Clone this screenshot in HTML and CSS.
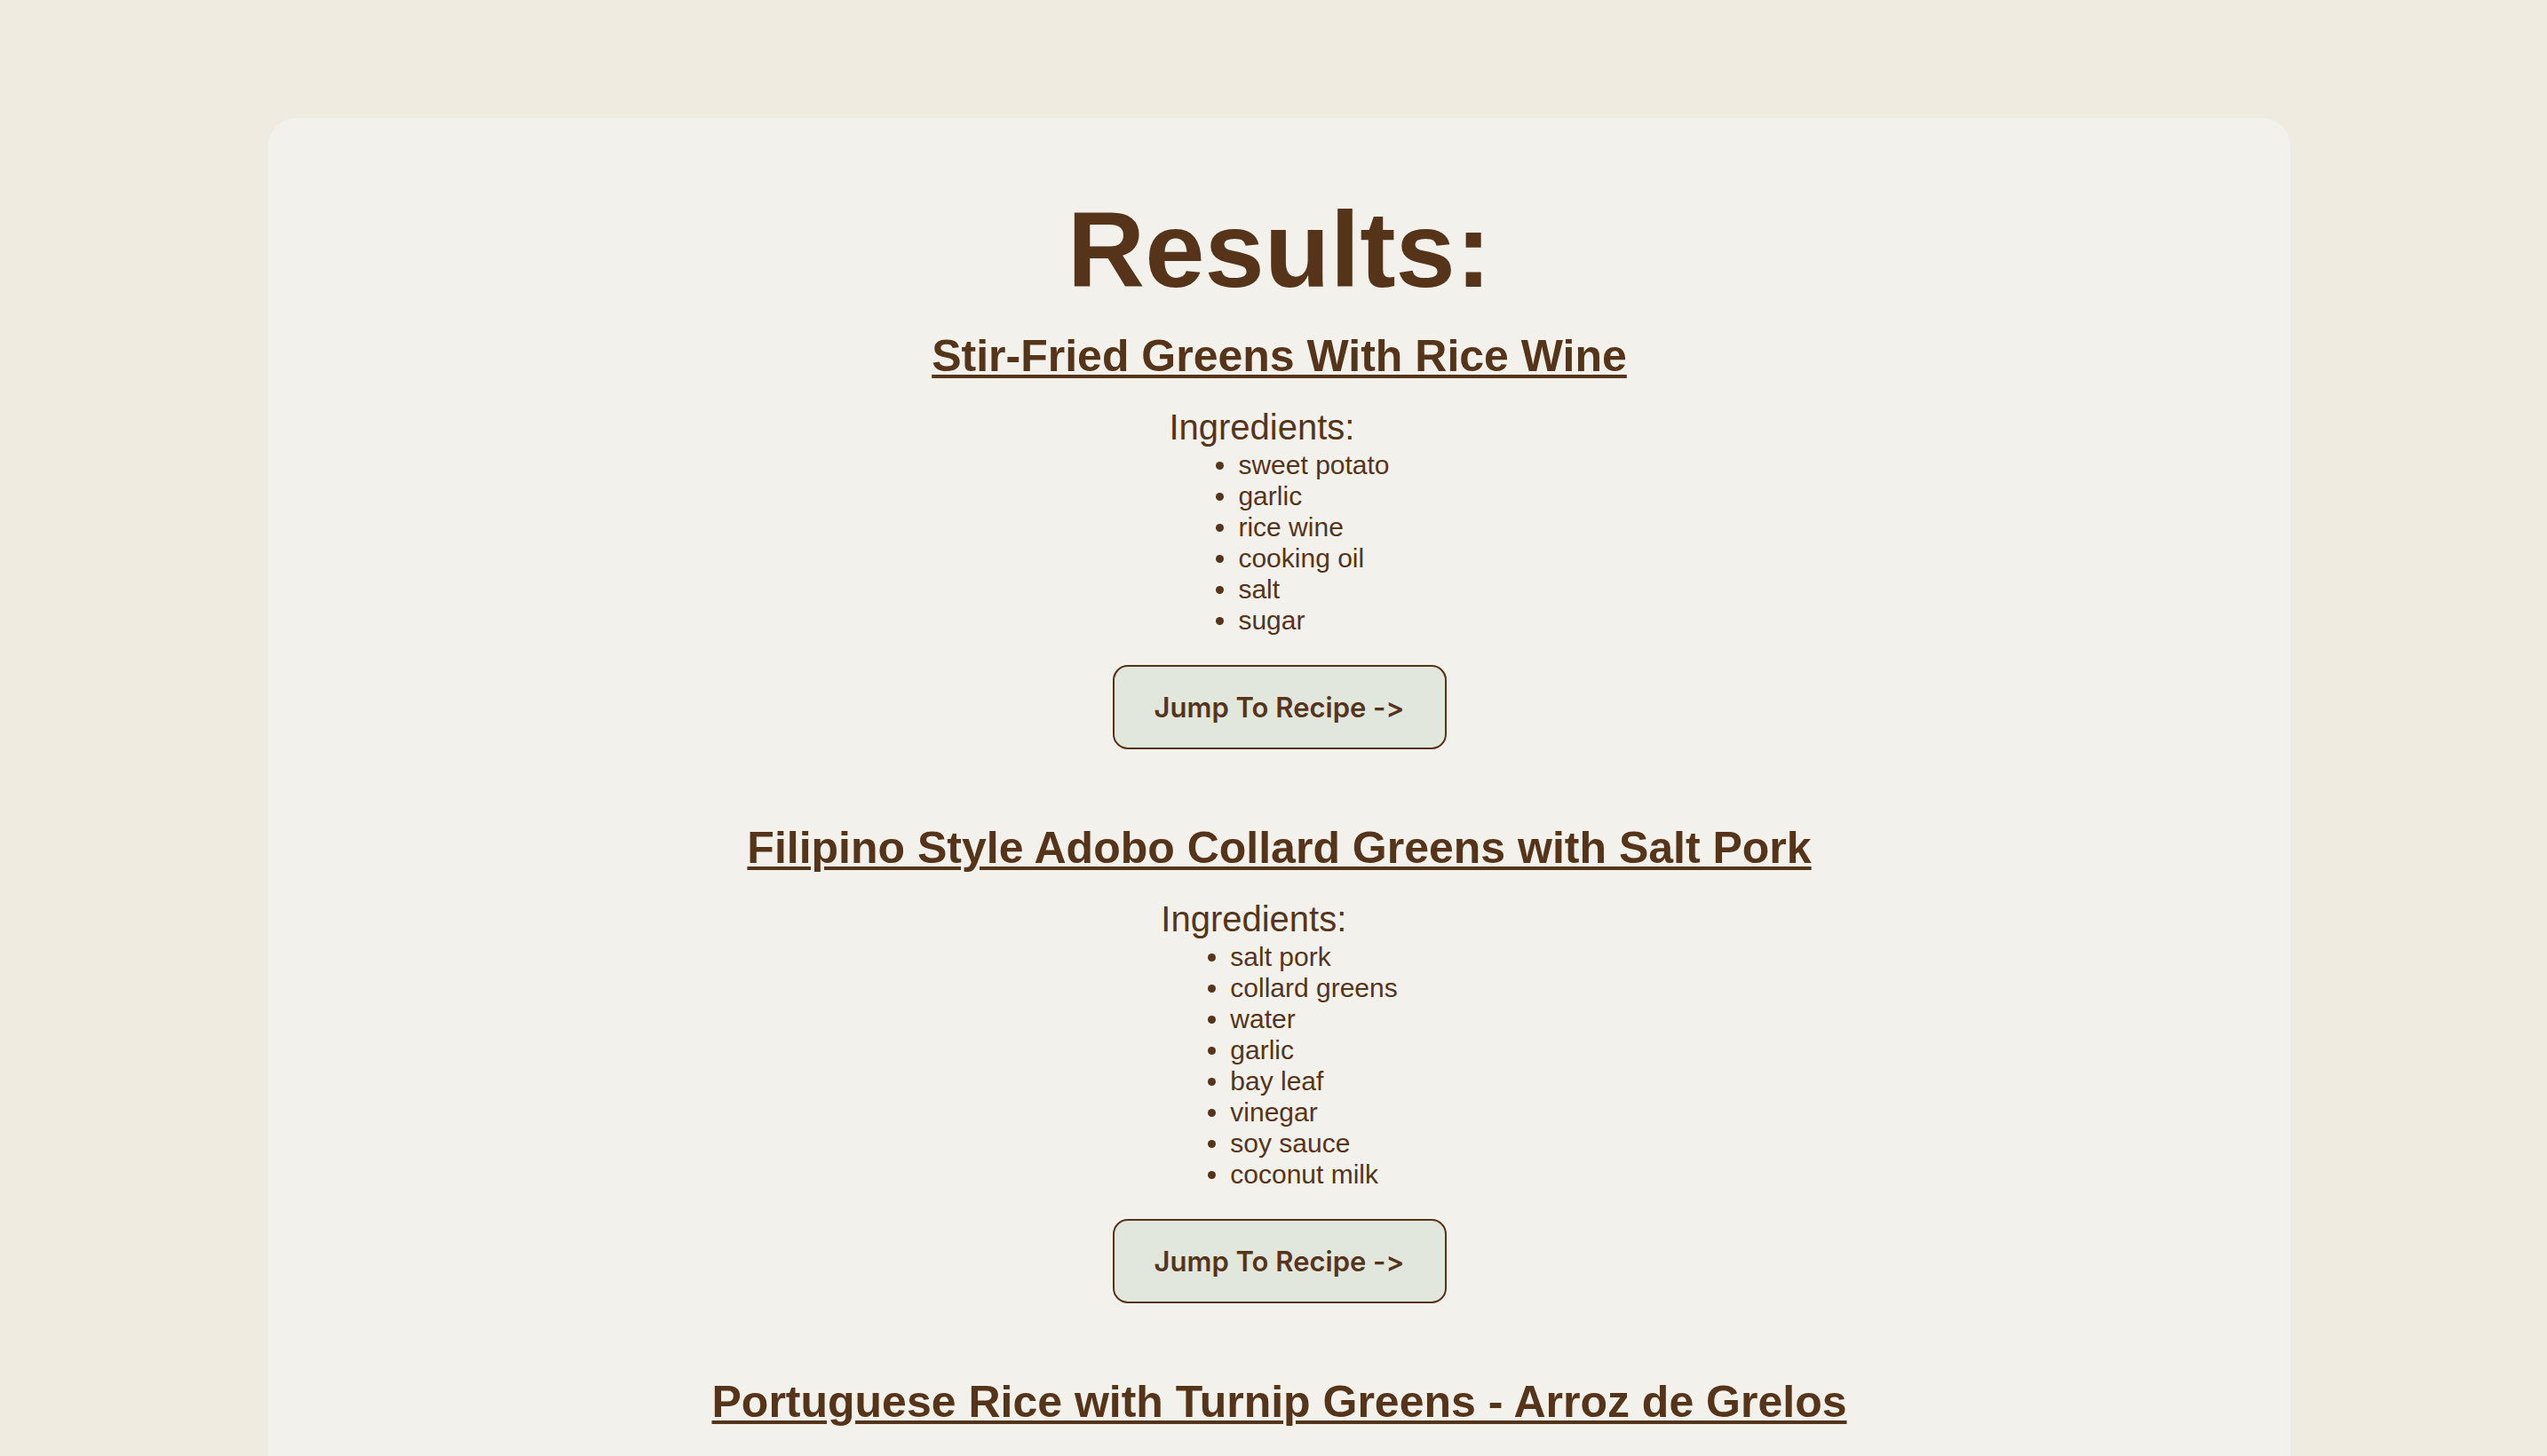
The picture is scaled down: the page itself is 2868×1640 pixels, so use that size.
FILE: index.html
```html
<!DOCTYPE html>
<html lang="en">
<head>
    <meta charset="UTF-8">
    <meta name="viewport" content="width=device-width, initial-scale=1.0">
    <title>Results</title>
    <link rel="stylesheet" href="styles.css">
</head>
<body>
    <div class="container">
        <h1>Results:</h1>

        <div class="recipe">
            <h2><a href="#">Stir-Fried Greens With Rice Wine</a></h2>
            <div class="ingredients">
                <p class="ingredients-label">Ingredients:</p>
                <ul>
                    <li>sweet potato</li>
                    <li>garlic</li>
                    <li>rice wine</li>
                    <li>cooking oil</li>
                    <li>salt</li>
                    <li>sugar</li>
                </ul>
            </div>
            <button class="jump-btn">Jump To Recipe -&gt;</button>
        </div>

        <div class="recipe">
            <h2><a href="#">Filipino Style Adobo Collard Greens with Salt Pork</a></h2>
            <div class="ingredients">
                <p class="ingredients-label">Ingredients:</p>
                <ul>
                    <li>salt pork</li>
                    <li>collard greens</li>
                    <li>water</li>
                    <li>garlic</li>
                    <li>bay leaf</li>
                    <li>vinegar</li>
                    <li>soy sauce</li>
                    <li>coconut milk</li>
                </ul>
            </div>
            <button class="jump-btn">Jump To Recipe -&gt;</button>
        </div>

        <div class="recipe">
            <h2><a href="#">Portuguese Rice with Turnip Greens - Arroz de Grelos</a></h2>
            <div class="ingredients">
                <p class="ingredients-label">Ingredients:</p>
                <ul>
                    <li>turnip greens</li>
                    <li>rice</li>
                    <li>onion</li>
                    <li>garlic</li>
                    <li>olive oil</li>
                    <li>salt</li>
                </ul>
            </div>
            <button class="jump-btn">Jump To Recipe -&gt;</button>
        </div>
    </div>
</body>
</html>
```

FILE: styles.css
```css
body {
    font-family: "Liberation Sans", Arial, sans-serif;
    background-color: #f0ebe1;
    margin: 0;
    padding-top: 133px;
    color: #55341a;
}
.container {
    margin: 0 289px 0 302px;
    background-color: #f3f1ec;
    border-radius: 32px;
    padding: 79px 0 120px;
    text-align: center;
}
h1 {
    font-size: 121px;
    line-height: 139px;
    margin: 0 0 21px;
}
h2 {
    font-size: 50px;
    line-height: 58px;
    margin: 0;
}
h2 a {
    color: #55341a;
    text-decoration-thickness: 4px;
    text-underline-offset: 4px;
}
.recipe {
    margin-bottom: 82px;
}
.ingredients {
    width: fit-content;
    margin: 28px auto 0;
    text-align: left;
}
.ingredients-label {
    font-size: 40px;
    line-height: 46px;
    margin: 0 0 2px;
}
ul {
    margin: 0;
    padding-left: 78px;
    font-size: 30px;
    line-height: 35px;
}
.jump-btn {
    display: block;
    width: 376px;
    height: 95px;
    margin: 33px auto 0;
    background-color: #e1e7dd;
    color: #55341a;
    border: 2px solid #55341a;
    border-radius: 17px;
    font-family: Inter, "Liberation Sans", sans-serif;
    font-size: 31px;
    font-weight: 600;
    font-feature-settings: "calt" 0;
    cursor: pointer;
}
```
